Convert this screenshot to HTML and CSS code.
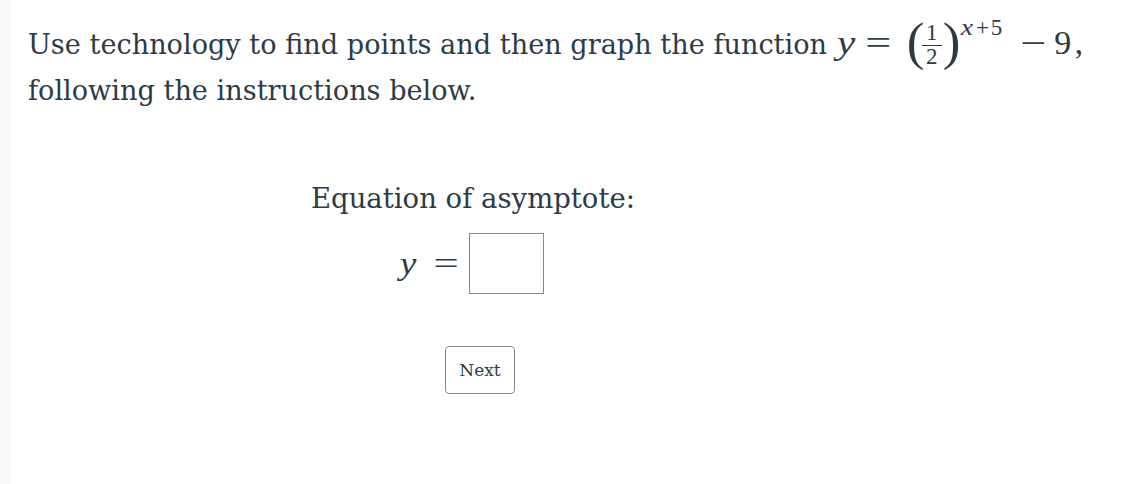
FILE: index.html
```html
<!DOCTYPE html>
<html>
<head>
<meta charset="utf-8">
<link rel="stylesheet" href="styles.css">
</head>
<body>
<div class="page">
  <p class="question">Use technology to find points and then graph the function <span class="math"><span class="atom m-y">y</span><span class="atom m-eq"><span class="wide">=</span></span><span class="atom m-paren">(</span><span class="frac"><span class="num">1</span><span class="den">2</span></span><span class="atom m-paren m-close">)</span><span class="atom m-sup"><span class="it">x</span>+5</span><span class="atom m-minus"><span class="wide2">−</span></span><span class="atom m-nine">9</span><span class="atom m-comma">,</span></span> following the instructions below.</p>
  <div class="task">
    <div class="label">Equation of asymptote:</div>
    <div class="answer-row">
      <span class="r-y">y</span><span class="r-eq"><span class="wide">=</span></span><span class="box"></span>
    </div>
    <button class="next">Next</button>
  </div>
</div>
</body>
</html>
```
FILE: styles.css
```css
html, body {
  margin: 0;
  padding: 0;
  background: #ffffff;
}
body {
  border-left: 12px solid #fafafa;
  min-height: 484px;
  box-sizing: border-box;
}
.page {
  padding: 20px 0 0 16px;
  color: #2d3b45;
  font-family: "DejaVu Serif", "Liberation Serif", serif;
}
.question {
  margin: 0;
  font-size: 27.15px;
  line-height: 46px;
  width: 1090px;
}
.math {
  font-family: "Liberation Serif", serif;
  font-size: 33px;
  white-space: nowrap;
}
.atom {
  display: inline-block;
  line-height: 0;
  text-align: center;
}
.wide {
  display: inline-block;
  transform: scaleX(1.4);
}
.wide2 {
  display: inline-block;
  transform: scaleX(1.4);
}
.m-y {
  width: 20px;
  margin-left: 1px;
  font-style: italic;
  transform: scaleX(1.25);
  transform-origin: left center;
  text-align: left;
}
.m-eq {
  width: 26px;
  margin-left: 9px;
}
.m-paren {
  width: 12px;
  margin-left: 15px;
  font-size: 53px;
  vertical-align: -5px;
}
.m-close {
  margin-left: 1px;
}
.frac {
  display: inline-flex;
  flex-direction: column;
  align-items: center;
  width: 20px;
  margin-left: 3px;
  vertical-align: 14px;
  font-size: 23px;
  line-height: 16px;
}
.num {
  align-self: stretch;
  text-align: center;
  padding-bottom: 4px;
  border-bottom: 1px solid #2d3b45;
}
.den {
  padding-top: 3px;
}
.m-sup {
  width: 47px;
  margin-left: 7px;
  font-size: 23px;
  vertical-align: 19px;
  letter-spacing: 2px;
  text-align: left;
}
.it {
  font-style: italic;
  display: inline-block;
  transform: scaleX(1.2);
  margin-right: 2px;
}
.m-minus {
  width: 22px;
  margin-left: 14px;
}
.m-nine {
  width: 18px;
  margin-left: 9px;
  font-size: 34px;
}
.m-comma {
  width: 7px;
  margin-left: 3px;
}
.task {
  width: 890px;
  margin-top: 64px;
  display: flex;
  flex-direction: column;
  align-items: center;
}
.label {
  font-size: 27.5px;
  line-height: 40px;
}
.answer-row {
  display: flex;
  align-items: center;
  margin-top: 15px;
  margin-right: 3px;
  font-family: "Liberation Serif", serif;
  font-size: 32px;
}
.r-y {
  display: block;
  width: 16px;
  font-style: italic;
  transform: scaleX(1.15);
  transform-origin: left center;
}
.r-eq {
  display: block;
  width: 27px;
  margin-left: 17px;
  text-align: center;
}
.box {
  display: block;
  width: 73px;
  height: 59px;
  margin-left: 9px;
  border: 1px solid #888888;
}
.next {
  margin-top: 52px;
  margin-left: 14px;
  font-family: "DejaVu Serif", serif;
  font-size: 17px;
  color: #2d3b45;
  background: #ffffff;
  border: 1px solid #888888;
  border-radius: 4px;
  width: 70px;
  height: 48px;
  padding: 0;
}
```
